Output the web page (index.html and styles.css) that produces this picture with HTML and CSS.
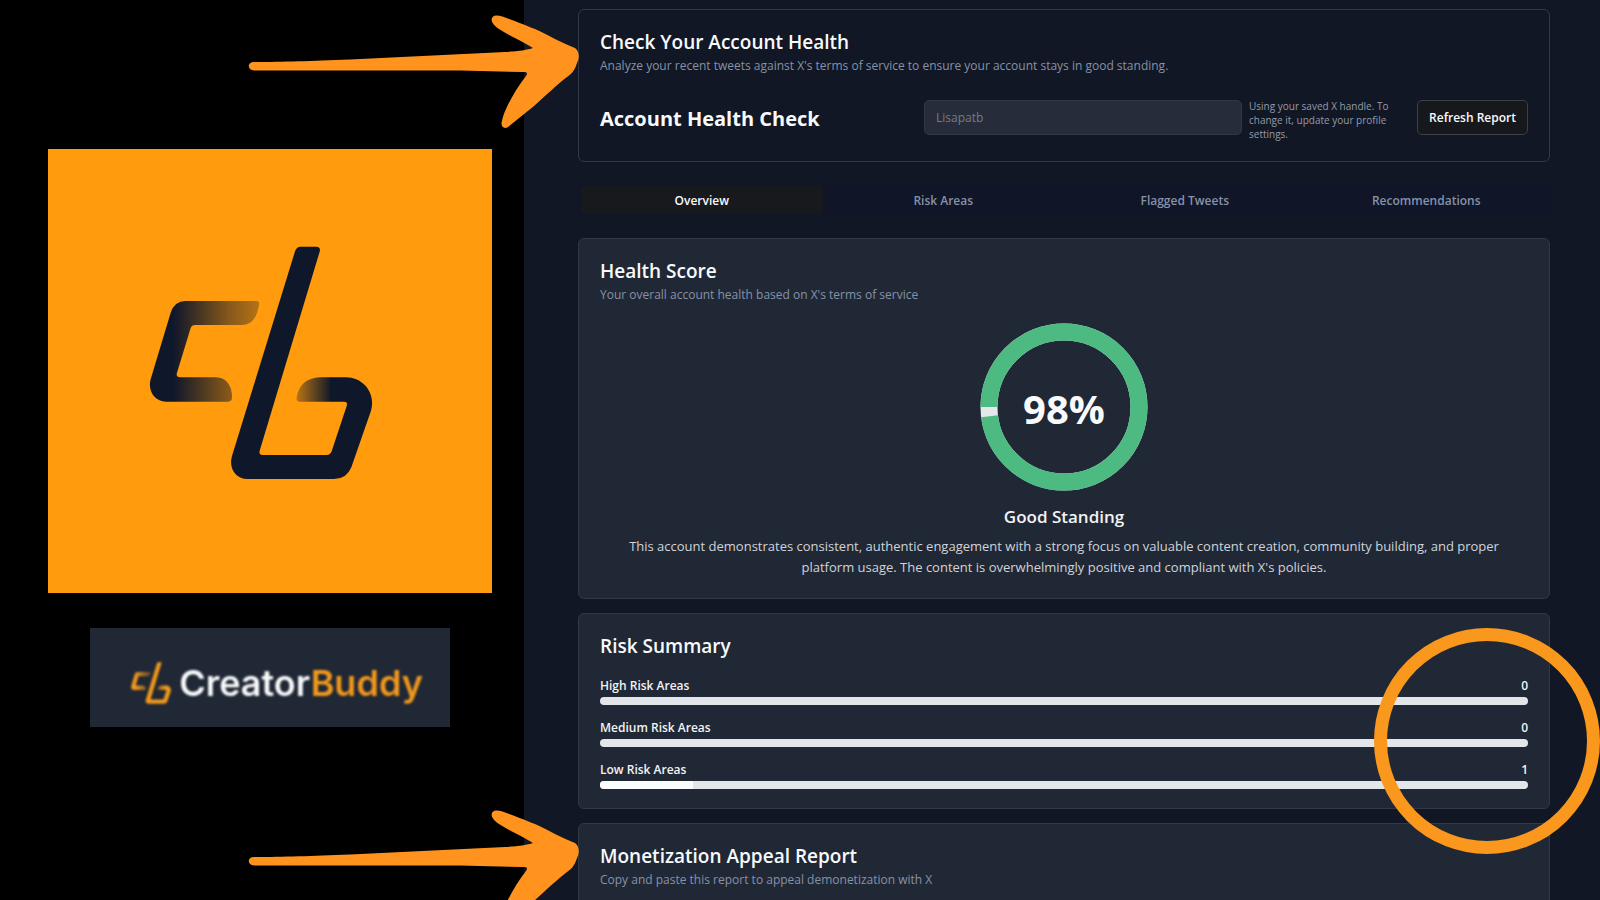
FILE: index.html
```html
<!DOCTYPE html>
<html lang="en">
<head>
<meta charset="utf-8">
<title>Account Health Check</title>
<link rel="stylesheet" href="styles.css">
</head>
<body>
<svg class="defs" aria-hidden="true">
  <defs>
    <linearGradient id="fade-right" gradientUnits="userSpaceOnUse" x1="130" y1="0" x2="390" y2="0">
      <stop offset="0" stop-color="#fff"/>
      <stop offset="0.65" stop-color="#fff" stop-opacity="0.5"/>
      <stop offset="1" stop-color="#fff" stop-opacity="0.3"/>
    </linearGradient>
    <linearGradient id="fade-left" gradientUnits="userSpaceOnUse" x1="500" y1="0" x2="605" y2="0">
      <stop offset="0" stop-color="#fff" stop-opacity="0.3"/>
      <stop offset="1" stop-color="#fff"/>
    </linearGradient>
    <mask id="mask-c" maskUnits="userSpaceOnUse" x="0" y="0" width="780" height="780"><rect width="780" height="780" fill="url(#fade-right)"/></mask>
    <mask id="mask-b" maskUnits="userSpaceOnUse" x="0" y="0" width="780" height="780"><rect width="780" height="780" fill="url(#fade-left)"/></mask>
    <g id="mark" fill="currentColor">
      <path d="M512 50H558Q573 50 569 65L389 662Q386 675 398 675H590Q601 675 605 664L650 528Q654 515 642 515H600V442H648C700 442 738 490 723 542L664 712Q650 747 612 747H352C318 747 295 715 306 678L495 64Q499 50 512 50Z"/>
      <path mask="url(#mask-b)" d="M601 515H508Q498 515 500 502Q510 445 570 442H601Z"/>
      <path mask="url(#mask-c)" d="M166 213H378Q390 213 387 224C380 265 365 285 335 285H196Q185 285 182 294L141 428Q137 442 150 442H258C290 442 307 470 306 502Q306 515 294 515H108C75 515 52 482 62 448L122 248Q134 213 166 213Z"/>
    </g>
    <path id="arrow" d="M14 62C45 62 70 61 110 59.5L265 52C278 51.5 287 50 293 48C285 43 270 36 259 29C249 23 250 15 257 15.5C263 16 275 21 295 29C310 36 320 42 335 48C339 51 340 57 337 63C335 69 333 73 327 77C318 84 305 96 294 106L268 127C264 130 260 126 262 121C264 110 275 90 286 76C288 73 287 72 283 72L220 70.5H14C7 70 7 62 14 62Z"/>
  </defs>
</svg>
<div class="stage">
  <aside class="brand">
    <svg class="brand-tile" viewBox="-246 -243 1332 1332" role="img" aria-label="Creator Buddy mark"><use href="#mark"/></svg>
    <div class="brand-plate">
      <svg class="brand-mark" viewBox="58 48 670 702" aria-hidden="true"><use href="#mark"/></svg>
      <span class="wordmark">Creator<span class="wordmark-accent">Buddy</span></span>
    </div>
  </aside>

  <main class="panel">
    <section class="card card-outline">
      <h2 class="card-title">Check Your Account Health</h2>
      <p class="card-sub">Analyze your recent tweets against X's terms of service to ensure your account stays in good standing.</p>
      <form class="check">
        <h1 class="check-title">Account Health Check</h1>
        <input class="handle" type="text" placeholder="Lisapatb" aria-label="X handle" disabled>
        <p class="hint">Using your saved X handle. To change it, update your profile settings.</p>
        <button class="refresh" type="button">Refresh Report</button>
      </form>
    </section>

    <nav class="tabs" role="tablist">
      <button class="tab tab-active" type="button" role="tab" aria-selected="true">Overview</button>
      <button class="tab" type="button" role="tab">Risk Areas</button>
      <button class="tab" type="button" role="tab">Flagged Tweets</button>
      <button class="tab" type="button" role="tab">Recommendations</button>
    </nav>

    <section class="card">
      <h2 class="card-title">Health Score</h2>
      <p class="card-sub">Your overall account health based on X's terms of service</p>
      <div class="score">
        <div class="donut">
          <svg class="donut-ring" viewBox="0 0 168 168" aria-hidden="true">
            <circle class="ring-track" cx="84" cy="84" r="75"/>
            <circle class="ring-value" cx="84" cy="84" r="75" pathLength="100" transform="rotate(180 84 84)"/>
          </svg>
          <span class="donut-label">98%</span>
        </div>
        <h3 class="standing">Good Standing</h3>
        <p class="verdict">This account demonstrates consistent, authentic engagement with a strong focus on valuable content creation, community building, and proper platform usage. The content is overwhelmingly positive and compliant with X's policies.</p>
      </div>
    </section>

    <section class="card card-risks">
      <h2 class="card-title">Risk Summary</h2>
      <div class="risks">
        <div class="risk">
          <div class="risk-row"><span>High Risk Areas</span><span>0</span></div>
          <div class="bar"><div class="bar-fill" style="width:0%"></div></div>
        </div>
        <div class="risk">
          <div class="risk-row"><span>Medium Risk Areas</span><span>0</span></div>
          <div class="bar"><div class="bar-fill" style="width:0%"></div></div>
        </div>
        <div class="risk">
          <div class="risk-row"><span>Low Risk Areas</span><span>1</span></div>
          <div class="bar"><div class="bar-fill" style="width:10%"></div></div>
        </div>
      </div>
    </section>

    <section class="card card-last">
      <h2 class="card-title">Monetization Appeal Report</h2>
      <p class="card-sub">Copy and paste this report to appeal demonetization with X</p>
    </section>
  </main>

  <svg class="arrow arrow-top" viewBox="0 0 360 140" aria-hidden="true"><use href="#arrow"/></svg>
  <svg class="arrow arrow-bottom" viewBox="0 0 360 140" aria-hidden="true"><use href="#arrow"/></svg>
  <div class="highlight"></div>
</div>
</body>
</html>
```
FILE: styles.css
```css
* { box-sizing: border-box; }
body, h1, h2, h3, p { margin: 0; }
body {
  background: #000;
  color: #f8fafc;
  font-family: "Open Sans", "Noto Sans", sans-serif;
  font-size: 12px;
}
button, input { font: inherit; }
.defs { position: absolute; width: 0; height: 0; }

.stage {
  position: relative;
  display: grid;
  grid-template-columns: minmax(0, 131fr) minmax(0, 269fr);
  height: 100vh;
  overflow: hidden;
}

.brand {
  display: flex;
  flex-direction: column;
  align-items: center;
  gap: 35px;
  padding: 149px 32px 0 48px;
  background: #000;
}
.brand-tile { width: 100%; aspect-ratio: 1; background: #ff9b0d; color: #0f172a; }
.brand-plate {
  display: flex;
  align-items: center;
  justify-content: center;
  gap: 8px;
  width: 360px;
  max-width: 100%;
  height: 99px;
  padding: 10px 0 0 14px;
  background: #212835;
}
.brand-mark { width: 40px; height: 42px; color: #f0981c; filter: blur(1px); }
.wordmark {
  font-family: Inter, sans-serif;
  font-size: 36px;
  font-weight: 600;
  line-height: 40px;
  filter: blur(1px);
}
.wordmark-accent { color: #f0981c; }

.panel {
  display: flex;
  flex-direction: column;
  padding: 9px 50px 0 54px;
  background: #111724;
}
.card {
  flex: none;
  margin-bottom: 14px;
  padding: 20px 21px;
  border: 1px solid #323845;
  border-radius: 6px;
  background: #212835;
}
.card-outline { margin-bottom: 22px; background: #111724; }
.card-risks { padding-bottom: 19px; }
.card-last { height: 160px; }
.card-title { font-size: 19px; font-weight: 600; line-height: 24px; }
.card-sub { margin-top: 2px; font-size: 12px; line-height: 20px; color: #8592a8; }

.check {
  display: grid;
  grid-template-columns: minmax(0, 1fr) 318px 175px 111px;
  align-items: start;
  margin-top: 23px;
}
.check-title { font-size: 20px; font-weight: 700; line-height: 40px; }
.handle {
  width: 100%;
  height: 35px;
  margin: 1px 0 0;
  padding: 0 11px;
  border: 1px solid #313745;
  border-radius: 5px;
  background: #262c3a;
  color: #757b87;
}
.handle::placeholder { color: #757b87; opacity: 1; }
.hint { padding: 0 27px 0 7px; font-size: 10px; line-height: 14px; color: #949ba8; }
.refresh {
  height: 35px;
  margin: 1px 0 0;
  padding: 0;
  border: 1px solid #3c4049;
  border-radius: 5px;
  background: #17181b;
  color: #f8fafc;
  font-weight: 600;
}

.tabs {
  display: grid;
  grid-template-columns: repeat(4, minmax(0, 1fr));
  margin-bottom: 22px;
  padding: 2px 3px;
  border-radius: 5px;
  background: #101528;
}
.tab {
  height: 28px;
  padding: 0;
  border: 0;
  border-radius: 4px;
  background: none;
  color: #8592a8;
  font-weight: 600;
}
.tab-active { background: #17191c; color: #f8fafc; }

.score { display: flex; flex-direction: column; align-items: center; margin-top: 18px; }
.donut { display: grid; place-items: center; }
.donut > * { grid-area: 1 / 1; }
.donut-ring { width: 168px; height: 168px; }
.ring-track, .ring-value { fill: none; stroke-width: 17px; }
.ring-track { stroke: #e5e8eb; }
.ring-value { stroke: #4dba81; stroke-dasharray: 98 2; }
.donut-label { padding-top: 4px; font-size: 40px; font-weight: 700; line-height: 48px; }
.standing { margin-top: 13px; font-size: 17px; font-weight: 600; line-height: 26px; color: #f1f3f5; }
.verdict { margin-top: 6px; padding: 0 16px; font-size: 13px; line-height: 21px; text-align: center; color: #d0d4da; }

.risks { display: grid; gap: 14px; margin-top: 19px; }
.risk-row { display: flex; justify-content: space-between; font-weight: 600; line-height: 18px; color: #f1f3f5; }
.bar { height: 8px; margin-top: 2px; border-radius: 4px; background: #e2e5e9; overflow: hidden; }
.bar-fill { height: 100%; background: #fbfcfd; }

.arrow { position: absolute; left: 240px; width: 360px; height: 140px; fill: #ff931e; }
.arrow-top { top: 0; }
.arrow-bottom { top: 795px; }
.highlight {
  position: absolute;
  top: 628px;
  right: 0;
  width: 226px;
  height: 226px;
  border: 13px solid #fa981d;
  border-radius: 50%;
}
```
